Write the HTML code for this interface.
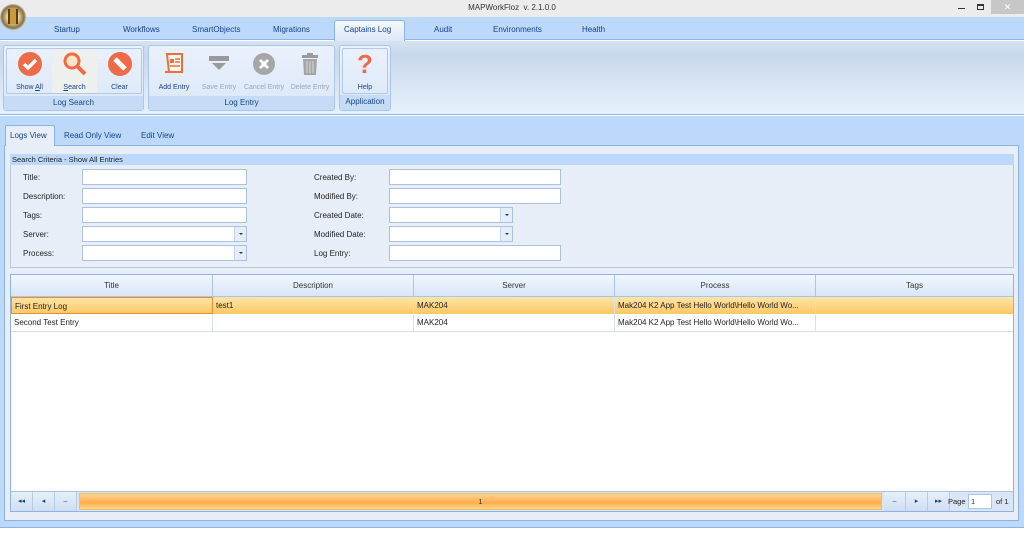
<!DOCTYPE html>
<html><head><meta charset="utf-8"><style>
*{margin:0;padding:0;box-sizing:border-box}
body{width:1024px;height:533px;overflow:hidden;background:#fff;font-family:"Liberation Sans",sans-serif;font-size:8px;color:#1e395b;position:relative}
.a{position:absolute}
.tab{position:absolute;top:25px;font-size:8px;color:#15428b;}
.lbl{position:absolute;font-size:8px;color:#222}
.fld{position:absolute;height:16px;background:#fff;border:1px solid #abc1de}
.dd{position:absolute;right:0;top:0;width:12px;height:14px;background:#e4edf9;border-left:1px solid #c5d5ea}
.dd:after{content:"";position:absolute;left:4px;top:6px;border:2px solid transparent;border-top:2px solid #333}
.col{position:absolute;top:0;height:21px;border-right:1px solid #a9c4e7;text-align:center;line-height:21px;color:#333;font-size:8px}
.cell{position:absolute;height:17px;line-height:17px;padding-left:3px;border-right:1px solid #d5e1f0;color:#222;font-size:8px;white-space:nowrap;overflow:hidden}
.btn{position:absolute;top:0;height:19px;width:22px;border-right:1px solid #b6cbe6;background:linear-gradient(#e6effb,#d0def2);text-align:center;line-height:19px;color:#15428b;font-size:7px}
.grp{position:absolute;top:45px;height:66px;border:1px solid #aac6ec;border-radius:3px;background:linear-gradient(#e9f1fc,#dbe7f7)}
.gl{position:absolute;left:0;right:0;bottom:0;height:14px;background:#c6dcf6;text-align:center;line-height:14px;font-size:8px;color:#15428b}
.ib{position:absolute;top:3px;height:46px;text-align:center;font-size:7px;color:#15428b}
.ib span{position:absolute;left:0;right:0;top:35px}
.dis{color:#9aa6b4}
</style></head><body>
<!-- title bar -->
<div class="a" style="left:0;top:0;width:1024px;height:17px;background:#ececec"></div>
<div class="a" style="left:0;top:3px;width:1024px;text-align:center;font-size:8px;color:#333">MAPWorkFloz&nbsp; v. 2.1.0.0</div>
<div class="a" style="left:958px;top:8px;width:7px;height:1px;background:#333"></div>
<div class="a" style="left:977px;top:4px;width:7px;height:6px;border:1px solid #333;border-top-width:2px"></div>
<div class="a" style="left:991px;top:0;width:33px;height:14px;background:#c7c7c7;color:#fff;text-align:center;font-size:9px;line-height:14px">✕</div>
<!-- tab strip -->
<div class="a" style="left:0;top:17px;width:1024px;height:23px;background:#bcd9fb;border-bottom:1px solid #8db2e3"></div>
<div class="a" style="left:0;top:4px;width:26px;height:26px;border-radius:50%;background:radial-gradient(#e5d9a0 30%,#8a7140 60%,#ddd 75%,#888 100%)"></div>
<div class="a" style="left:8px;top:9px;width:10px;height:15px;border-left:2px solid #5a3a1a;border-right:2px solid #5a3a1a;background:#c99a3a"></div>
<div class="tab" style="left:54px">Startup</div>
<div class="tab" style="left:123px">Workflows</div>
<div class="tab" style="left:192px">SmartObjects</div>
<div class="tab" style="left:273px">Migrations</div>
<div class="a" style="left:334px;top:20px;width:71px;height:21px;background:linear-gradient(#f4f8fe,#dde8f7);border:1px solid #8db2e3;border-bottom:none;border-radius:3px 3px 0 0"></div>
<div class="tab" style="left:344px;color:#15428b">Captains Log</div>
<div class="tab" style="left:434px">Audit</div>
<div class="tab" style="left:493px">Environments</div>
<div class="tab" style="left:582px">Health</div>
<!-- ribbon -->
<div class="a" style="left:0;top:41px;width:1024px;height:74px;background:linear-gradient(#d6e2f2 0%,#c6d8ec 20%,#dce8f6 70%,#e6f0fc 100%);border-bottom:1px solid #8db2e3"></div>
<div class="grp" style="left:3px;width:141px">
 <div class="a" style="left:2px;top:2px;width:136px;height:46px;border:1px solid #b1c8e6;border-radius:2px"></div>
 <div class="a" style="left:48px;top:3px;width:45px;height:44px;background:#eef0ee"></div>
 <div class="ib" style="left:3px;width:45px"><svg width="26" height="26" viewBox="0 0 26 26" style="margin-top:2px"><circle cx="13" cy="13" r="12" fill="#ef6a46"/><path d="M7 13l4 4 8-8" stroke="#fff" stroke-width="3.5" fill="none"/></svg><span>Show <u>A</u>ll</span></div>
 <div class="ib" style="left:48px;width:45px"><svg width="26" height="26" viewBox="0 0 26 26" style="margin-top:2px"><circle cx="10" cy="10" r="7" fill="#fde6c8" stroke="#ef6a46" stroke-width="3"/><path d="M15 15l8 8" stroke="#ef6a46" stroke-width="4"/></svg><span><u>S</u>earch</span></div>
 <div class="ib" style="left:93px;width:45px"><svg width="26" height="26" viewBox="0 0 26 26" style="margin-top:2px"><circle cx="13" cy="13" r="12" fill="#ef6a46"/><path d="M8 8l10 10" stroke="#fff" stroke-width="5"/></svg><span>Clear</span></div>
 <div class="gl">Log Search</div>
</div>
<div class="grp" style="left:148px;width:187px">
 <div class="ib" style="left:2px;width:46px"><svg width="26" height="26" viewBox="0 0 26 26" style="margin-top:2px"><path d="M6 3h15v18H8z" fill="#fff5ec" stroke="#e8703a" stroke-width="2"/><path d="M4 21h15" stroke="#e8703a" stroke-width="2"/><rect x="9" y="8" width="4" height="4" fill="#e8703a"/><path d="M14 8h5M14 11h5M9 15h10" stroke="#e8703a" stroke-width="1.5"/></svg><span>Add Entry</span></div>
 <div class="ib dis" style="left:48px;width:44px"><svg width="26" height="26" viewBox="0 0 26 26" style="margin-top:2px"><rect x="3" y="5" width="20" height="5" fill="#9a9a9a"/><path d="M6 12h14l-7 7z" fill="#9a9a9a"/></svg><span>Save Entry</span></div>
 <div class="ib dis" style="left:92px;width:46px"><svg width="26" height="26" viewBox="0 0 26 26" style="margin-top:2px"><circle cx="13" cy="13" r="11" fill="#a6a6a6"/><path d="M9 9l8 8M17 9l-8 8" stroke="#fff" stroke-width="3"/></svg><span>Cancel Entry</span></div>
 <div class="ib dis" style="left:138px;width:46px"><svg width="26" height="26" viewBox="0 0 26 26" style="margin-top:2px"><rect x="5" y="4" width="16" height="3" fill="#9a9a9a"/><rect x="10" y="2" width="6" height="2" fill="#9a9a9a"/><path d="M6 8h14l-1 16H7z" fill="#a6a6a6"/><path d="M10 10v12M13 10v12M16 10v12" stroke="#d8d8d8"/></svg><span>Delete Entry</span></div>
 <div class="gl">Log Entry</div>
</div>
<div class="grp" style="left:339px;width:52px">
 <div class="a" style="left:2px;top:2px;width:46px;height:46px;border:1px solid #b1c8e6;border-radius:2px"></div>
 <div class="ib" style="left:2px;width:46px"><div style="margin-top:2px;font:bold 26px/26px 'Liberation Sans';color:#ef6a46">?</div><span>Help</span></div>
 <div class="gl" style="height:15px">Application</div>
</div>
<!-- blue band -->
<div class="a" style="left:0;top:116px;width:1024px;height:411px;background:#bcd9fb"></div>
<div class="a" style="left:0;top:527px;width:1024px;height:6px;background:#fff;border-top:1px solid #8db2e3"></div>
<!-- content panel -->
<div class="a" style="left:4px;top:145px;width:1015px;height:376px;background:#e8eef8;border:1px solid #8db2e3"></div>
<div class="a" style="left:5px;top:125px;width:50px;height:21px;background:#e8eef8;border:1px solid #8db2e3;border-bottom:none;border-radius:2px 2px 0 0"></div>
<div class="a" style="left:10px;top:131px;font-size:8px;color:#15428b">Logs View</div>
<div class="a" style="left:64px;top:131px;font-size:8px;color:#15428b">Read Only View</div>
<div class="a" style="left:141px;top:131px;font-size:8px;color:#15428b">Edit View</div>
<!-- search criteria -->
<div class="a" style="left:10px;top:154px;width:1004px;height:114px;border:1px solid #b1c8e6;background:#e8eef8"></div>
<div class="a" style="left:10px;top:154px;width:1004px;height:11px;background:#bcd9fb"></div>
<div class="a" style="left:12px;top:155px;font-size:7.5px;color:#222">Search Criteria - Show All Entries</div>
<div class="lbl" style="left:23px;top:173px">Title:</div>
<div class="lbl" style="left:23px;top:192px">Description:</div>
<div class="lbl" style="left:23px;top:211px">Tags:</div>
<div class="lbl" style="left:23px;top:230px">Server:</div>
<div class="lbl" style="left:23px;top:249px">Process:</div>
<div class="fld" style="left:82px;top:169px;width:165px"></div>
<div class="fld" style="left:82px;top:188px;width:165px"></div>
<div class="fld" style="left:82px;top:207px;width:165px"></div>
<div class="fld" style="left:82px;top:226px;width:165px"><div class="dd"></div></div>
<div class="fld" style="left:82px;top:245px;width:165px"><div class="dd"></div></div>
<div class="lbl" style="left:314px;top:173px">Created By:</div>
<div class="lbl" style="left:314px;top:192px">Modified By:</div>
<div class="lbl" style="left:314px;top:211px">Created Date:</div>
<div class="lbl" style="left:314px;top:230px">Modified Date:</div>
<div class="lbl" style="left:314px;top:249px">Log Entry:</div>
<div class="fld" style="left:389px;top:169px;width:172px"></div>
<div class="fld" style="left:389px;top:188px;width:172px"></div>
<div class="fld" style="left:389px;top:207px;width:124px"><div class="dd"></div></div>
<div class="fld" style="left:389px;top:226px;width:124px"><div class="dd"></div></div>
<div class="fld" style="left:389px;top:245px;width:172px"></div>
<!-- grid -->
<div class="a" style="left:10px;top:274px;width:1004px;height:238px;background:#fff;border:1px solid #8db2e3">
 <div class="a" style="left:0;top:0;width:1002px;height:22px;background:linear-gradient(#f2f7fe,#d9e6f7);border-bottom:1px solid #a9c4e7"></div>
 <div class="col" style="left:0;width:202px">Title</div>
 <div class="col" style="left:202px;width:201px">Description</div>
 <div class="col" style="left:403px;width:201px">Server</div>
 <div class="col" style="left:604px;width:201px">Process</div>
 <div class="col" style="left:805px;width:197px;border:none">Tags</div>
 <div class="a" style="left:0;top:22px;width:1002px;height:17px;background:linear-gradient(#ffe5a8,#fcc864)"></div>
 <div class="cell" style="left:0;top:22px;width:202px;border:1px solid #e8902a">First Entry Log</div>
 <div class="cell" style="left:202px;top:22px;width:201px">test1</div>
 <div class="cell" style="left:403px;top:22px;width:201px">MAK204</div>
 <div class="cell" style="left:604px;top:22px;width:201px">Mak204 K2 App Test Hello World\Hello World Wo...</div>
 <div class="a" style="left:0;top:56px;width:1002px;height:1px;background:#d5e1f0"></div>
 <div class="cell" style="left:0;top:39px;width:202px">Second Test Entry</div>
 <div class="cell" style="left:202px;top:39px;width:201px"></div>
 <div class="cell" style="left:403px;top:39px;width:201px">MAK204</div>
 <div class="cell" style="left:604px;top:39px;width:201px">Mak204 K2 App Test Hello World\Hello World Wo...</div>
 <!-- pager -->
 <div class="a" style="left:0;top:216px;width:1002px;height:20px;background:#dae6f6;border-top:1px solid #a9c4e7">
  <div class="btn" style="left:0">◂◂</div>
  <div class="btn" style="left:22px">◂</div>
  <div class="btn" style="left:44px">‒</div>
  <div class="a" style="left:68px;top:1px;width:803px;height:17px;background:linear-gradient(#ffd290,#fdae4c 60%,#ffd98c);border:1px solid #f0c060;text-align:center;line-height:15px;color:#333;font-size:7.5px">1</div>
  <div class="btn" style="left:873px">‒</div>
  <div class="btn" style="left:895px">▸</div>
  <div class="btn" style="left:917px">▸▸</div>
  <div class="a" style="left:937px;top:5px;font-size:7.5px;color:#222">Page</div>
  <div class="a" style="left:957px;top:2px;width:24px;height:15px;background:#fff;border:1px solid #a9c4e7;font-size:7.5px;padding-left:2px;line-height:13px">1</div>
  <div class="a" style="left:985px;top:5px;font-size:7.5px;color:#222">of 1</div>
 </div>
</div>
</body></html>
